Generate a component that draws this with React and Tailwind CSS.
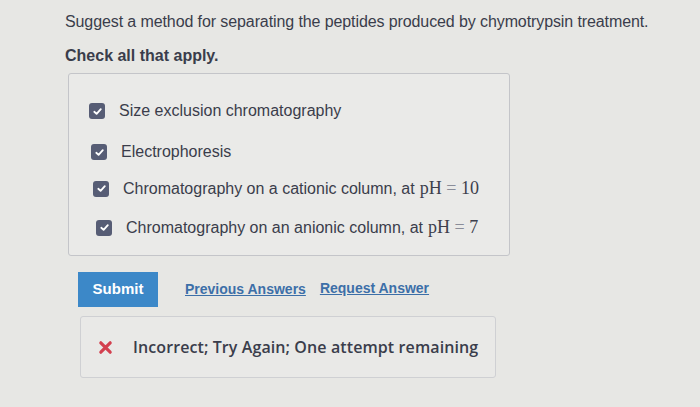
import React from "react";

function Check() {
  return (
    <span className="flex h-[16px] w-[16px] shrink-0 items-center justify-center rounded-[3px] bg-[#575d75]">
      <svg viewBox="0 0 12 12" className="h-[11px] w-[11px]">
        <path d="M2.5 6.3 L5 8.6 L9.6 3.4" fill="none" stroke="white" strokeWidth="2" strokeLinecap="round" strokeLinejoin="round" />
      </svg>
    </span>
  );
}

function PH({ v }) {
  return (
    <span className="ml-[5px] whitespace-nowrap font-['Liberation_Serif',serif] text-[18px] text-[#3d3f4c]">
      pH <span className="text-[#8a8d99]">=</span> {v}
    </span>
  );
}

const options = [
  { label: "Size exclusion chromatography", cls: "ml-[20px] mt-[27px]" },
  { label: "Electrophoresis", cls: "ml-[22px] mt-[21px]" },
  { label: "Chromatography on a cationic column, at", ph: "10", cls: "ml-[24px] mt-[16px]" },
  { label: "Chromatography on an anionic column, at", ph: "7", cls: "ml-[27px] mt-[18px]" },
];

export default function App() {
  return (
    <div className="h-[407px] w-[700px] overflow-hidden bg-[#e7e7e4] font-['Liberation_Sans',Arial,sans-serif] text-[#3a3d4b]">
      <div className="pl-[65px] pt-[12px]">
        <p className="text-[16px] leading-[20px] tracking-[-0.1px]">
          Suggest a method for separating the peptides produced by chymotrypsin treatment.
        </p>
        <p className="mt-[14px] text-[16px] leading-[20px] font-bold">Check all that apply.</p>

        <div className="ml-[3px] mt-[7px] h-[183px] w-[442px] rounded-[3px] border border-[#c4c5c9] bg-[#eaeae8]">
          {options.map((o) => (
            <div key={o.label} className={`flex items-center whitespace-nowrap ${o.cls}`}>
              <Check />
              <span className="ml-[14px] text-[16px] leading-[20px]">
                {o.label}
                {o.ph && <PH v={o.ph} />}
              </span>
            </div>
          ))}
        </div>

        <div className="ml-[13px] mt-[16px] flex items-center">
          <button className="h-[35px] w-[80px] bg-[#3c88c8] text-[15px] font-bold text-white">Submit</button>
          <a className="ml-[27px] text-[14px] font-bold text-[#3c6fa8] underline">Previous Answers</a>
          <a className="ml-[14px] -mt-[3px] text-[14px] font-bold text-[#3c6fa8] underline">Request Answer</a>
        </div>

        <div className="ml-[15px] mt-[9px] flex h-[62px] w-[416px] items-center rounded-[3px] border border-[#cfd0d3] bg-[#e9e9e7] pl-[17px]">
          <svg viewBox="0 0 16 16" className="h-[15px] w-[15px]">
            <path d="M3 3 L13 13 M13 3 L3 13" stroke="#d3404f" strokeWidth="3.4" strokeLinecap="round" />
          </svg>
          <span className="ml-[20px] font-['Open_Sans',sans-serif] text-[16px] font-semibold tracking-[0.1px] text-[#3a3d4b]">
            Incorrect; Try Again; One attempt remaining
          </span>
        </div>
      </div>
    </div>
  );
}
